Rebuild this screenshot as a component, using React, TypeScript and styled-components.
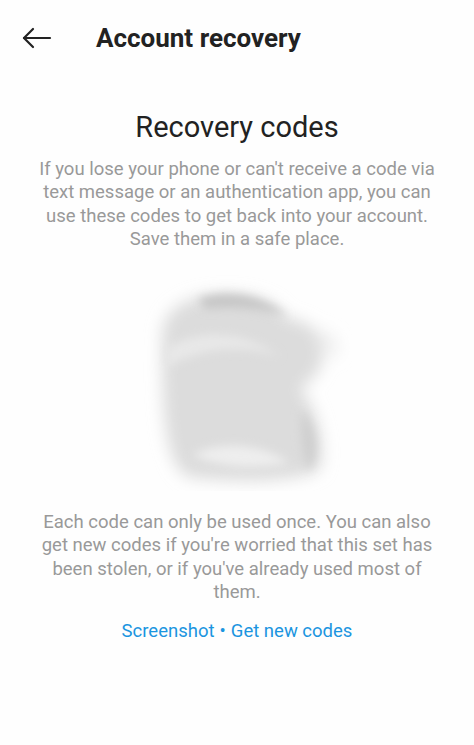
import React from "react";
import styled, { createGlobalStyle } from "styled-components";

const Global = createGlobalStyle`
  html, body { margin: 0; padding: 0; background: #fefefe; }
  body { font-family: Roboto, "Noto Sans", Arial, sans-serif; -webkit-font-smoothing: antialiased; }
`;

const Page = styled.div`
  width: 474px;
  height: 745px;
  background: #fefefe;
  display: flex;
  flex-direction: column;
  overflow: hidden;
`;

const Header = styled.header`
  display: flex;
  align-items: center;
  height: 76px;
  padding-left: 20px;
`;

const BackButton = styled.button`
  border: 0;
  background: none;
  padding: 0;
  width: 34px;
  height: 34px;
  display: flex;
  align-items: center;
  justify-content: center;
  color: #222;
`;

const HeaderTitle = styled.h1`
  margin: 0 0 0 42px;
  font-size: 26px;
  font-weight: 700;
  color: #222;
  letter-spacing: 0;
`;

const Content = styled.main`
  display: flex;
  flex-direction: column;
  align-items: center;
  padding: 34px 36px 0;
`;

const Title = styled.h2`
  margin: 0;
  font-size: 29px;
  line-height: 34px;
  font-weight: 400;
  color: #222;
`;

const Paragraph = styled.p<{ $top: number }>`
  margin: ${(p) => p.$top}px 0 0;
  font-size: 18.5px;
  line-height: 23.3px;
  color: #999;
  text-align: center;
`;

const Blob = styled.div`
  margin-top: 18px;
  width: 230px;
  height: 222px;
  display: flex;
  align-items: center;
  justify-content: center;
`;

const Links = styled.div`
  margin-top: 16px;
  font-size: 18.5px;
  line-height: 22px;
  color: #1b95e0;
  display: flex;
  gap: 5px;
  align-items: center;
`;

const Link = styled.span``;

export default function App() {
  return (
    <>
      <Global />
      <Page>
        <Header>
          <BackButton aria-label="Back">
            <svg width="32" height="24" viewBox="0 0 32 24" fill="none" stroke="currentColor" strokeWidth="2.2" strokeLinecap="round" strokeLinejoin="round">
              <path d="M29 12H3" />
              <path d="M12 3L3 12L12 21" />
            </svg>
          </BackButton>
          <HeaderTitle>Account recovery</HeaderTitle>
        </Header>
        <Content>
          <Title>Recovery codes</Title>
          <Paragraph $top={14}>
            If you lose your phone or can't receive a code via text message or an authentication app, you can use these codes to get back into your account. Save them in a safe place.
          </Paragraph>
          <Blob>
            <svg width="230" height="222" viewBox="0 0 230 222">
              <defs>
                <filter id="b1" x="-30%" y="-30%" width="160%" height="160%">
                  <feGaussianBlur stdDeviation="8" />
                </filter>
                <filter id="b2" x="-30%" y="-30%" width="160%" height="160%">
                  <feGaussianBlur stdDeviation="5" />
                </filter>
              </defs>
              <g filter="url(#b1)">
                <path d="M40 72 C38 42 62 26 102 25 C135 24 155 34 166 50 C192 50 204 72 200 94 C196 108 184 114 178 120 C194 138 204 172 198 200 C178 214 108 214 66 208 C44 196 40 150 40 72 Z" fill="#dcdcdc" />
                <path d="M195 60 C215 65 222 80 210 90 Z" fill="#ececec" />
              </g>
              <g filter="url(#b2)">
                <path d="M76 30 C106 20 142 26 166 48 C148 42 116 36 84 40 Z" fill="#c6c6c6" />
                <path d="M44 80 C76 58 126 62 158 88 C126 76 86 76 44 98 Z" fill="#e8e8e8" />
                <path d="M70 186 C102 170 142 176 168 194 C138 200 100 200 70 186 Z" fill="#eeeeee" />
                <path d="M180 140 C196 160 198 186 186 202 C180 184 178 162 180 140 Z" fill="#cfcfcf" />
              </g>
            </svg>
          </Blob>
          <Paragraph $top={20}>
            Each code can only be used once. You can also get new codes if you're worried that this set has been stolen, or if you've already used most of them.
          </Paragraph>
          <Links>
            <Link>Screenshot</Link>
            <span>•</span>
            <Link>Get new codes</Link>
          </Links>
        </Content>
      </Page>
    </>
  );
}
